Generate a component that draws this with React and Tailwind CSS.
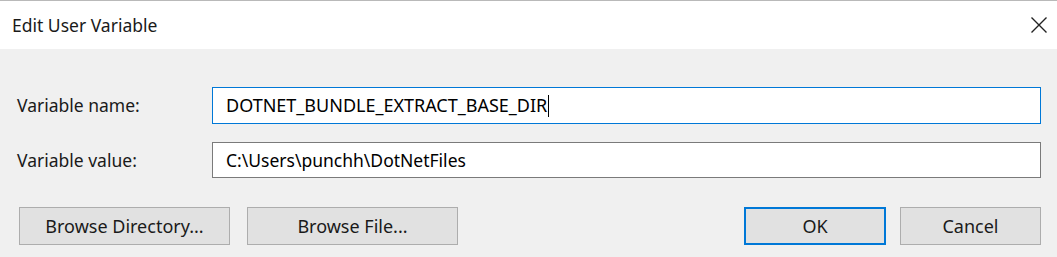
export default function App() {
  const font = { fontFamily: '"Noto Sans", "Open Sans", "DejaVu Sans", sans-serif' };
  return (
    <div className="w-[1057px] h-[257px] bg-[#f0f0f0] overflow-hidden flex flex-col text-black" style={font}>
      <div className="h-px bg-[#b9b9b9]" />
      <div className="h-[48px] bg-white flex items-center justify-between pl-[12px] pr-[9px]">
        <span className="text-[17.5px] text-[#1a1a1a]">Edit User Variable</span>
        <svg width="18" height="18" viewBox="0 0 18 18">
          <path d="M1.5 1.5 L16.5 16.5 M16.5 1.5 L1.5 16.5" stroke="#222" strokeWidth="1.4" fill="none" />
        </svg>
      </div>
      <div className="flex flex-col pt-[38px] pr-[16px]">
        <div className="flex items-center h-[37px]">
          <div className="w-[212px] pl-[17px] text-[17.5px] text-[#1a1a1a]">Variable name:</div>
          <div className="w-[829px] h-[37px] bg-white border border-[#0078d7] flex items-center pl-[13px] text-[18px]">
            <span>DOTNET_BUNDLE_EXTRACT_BASE_DIR</span>
            <span className="w-px h-[22px] bg-black ml-[1px]" />
          </div>
        </div>
        <div className="flex items-center h-[36px] mt-[18px]">
          <div className="w-[212px] pl-[17px] text-[17.5px] text-[#1a1a1a]">Variable value:</div>
          <div className="w-[829px] h-[36px] bg-white border border-[#7a7a7a] flex items-center pl-[13px] text-[17.5px]">
            C:\Users\punchh\DotNetFiles
          </div>
        </div>
        <div className="flex items-center mt-[29px] pl-[19px] h-[38px]">
          <button className="w-[211px] h-[38px] bg-[#e1e1e1] border border-[#adadad] text-[18px] text-[#1a1a1a]">Browse Directory...</button>
          <button className="w-[211px] h-[38px] bg-[#e1e1e1] border border-[#adadad] text-[18px] text-[#1a1a1a] ml-[17px]">Browse File...</button>
          <div className="flex-1" />
          <button className="w-[142px] h-[38px] bg-[#e1e1e1] border-2 border-[#0078d7] text-[18px] text-[#1a1a1a]">OK</button>
          <button className="w-[141px] h-[38px] bg-[#e1e1e1] border border-[#adadad] text-[18px] text-[#1a1a1a] ml-[14px]">Cancel</button>
        </div>
      </div>
    </div>
  );
}
